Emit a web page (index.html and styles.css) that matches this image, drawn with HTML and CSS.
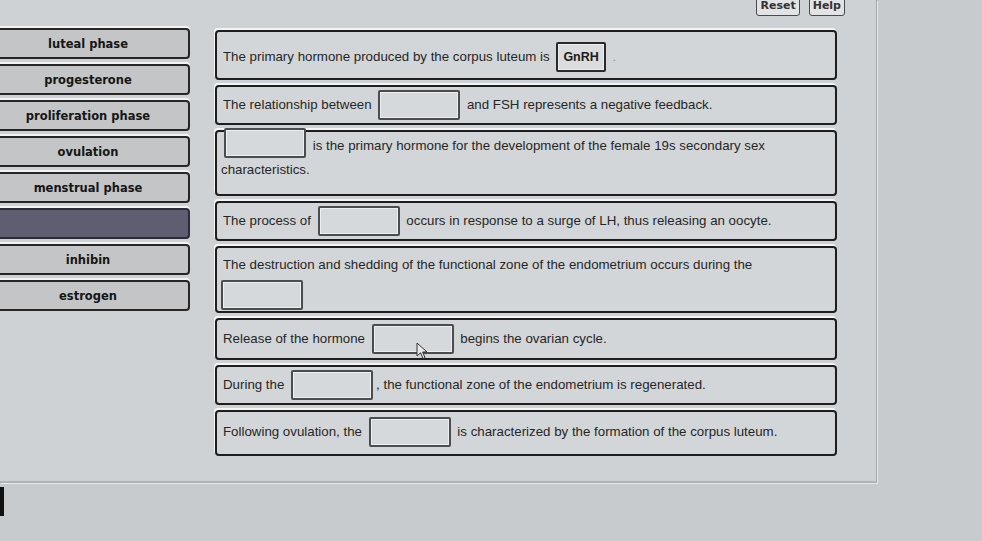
FILE: index.html
```html
<!DOCTYPE html>
<html>
<head>
<meta charset="utf-8">
<link rel="stylesheet" href="styles.css">
</head>
<body>
<div class="panel">
  <div class="toolbar">
    <span class="btn">Reset</span>
    <span class="btn">Help</span>
  </div>
  <div class="content">
    <div class="bank">
      <div class="chip">luteal phase</div>
      <div class="chip">progesterone</div>
      <div class="chip">proliferation phase</div>
      <div class="chip">ovulation</div>
      <div class="chip">menstrual phase</div>
      <div class="chip chip-empty"></div>
      <div class="chip">inhibin</div>
      <div class="chip">estrogen</div>
    </div>
    <div class="statements">
      <div class="stmt s1">The primary hormone produced by the corpus luteum is <span class="blank filled">GnRH</span> <span class="dot">.</span></div>
      <div class="stmt s2">The relationship between <span class="blank"></span> and FSH represents a negative feedback.</div>
      <div class="stmt s3"><span class="blank"></span> is the primary hormone for the development of the female 19s secondary sex characteristics.</div>
      <div class="stmt s2">The process of <span class="blank"></span> occurs in response to a surge of LH, thus releasing an oocyte.</div>
      <div class="stmt s5">The destruction and shedding of the functional zone of the endometrium occurs during the <span class="blank"></span> <span class="dot">.</span></div>
      <div class="stmt s6">Release of the hormone <span class="blank cursor-host"><svg class="cursor" width="14" height="18" viewBox="0 0 14 18"><path d="M1 1 L1 14 L4.5 10.8 L7 16.5 L9 15.6 L6.6 10 L11 10 Z" fill="#e8e8e8" stroke="#333" stroke-width="1"/></svg></span> begins the ovarian cycle.</div>
      <div class="stmt s2">During the <span class="blank"></span>, the functional zone of the endometrium is regenerated.</div>
      <div class="stmt s8">Following ovulation, the <span class="blank"></span> is characterized by the formation of the corpus luteum.</div>
    </div>
  </div>
</div>
<div class="marker"></div>
</body>
</html>
```

FILE: styles.css
```css
html, body {
  margin: 0;
  padding: 0;
}
body {
  background: #c8cbce;
  font-family: "Liberation Sans", Arial, sans-serif;
  color: #222;
  overflow: hidden;
  width: 982px;
  height: 541px;
}
.panel {
  width: 877px;
  height: 483px;
  box-sizing: border-box;
  background: #cfd2d5;
  border-right: 1px solid #a4a7aa;
  border-bottom: 2px solid #b0b3b6;
  box-shadow: 1px 1px 0 #e6e8ea;
  display: flex;
  flex-direction: column;
}
.toolbar {
  height: 28px;
  display: flex;
  justify-content: flex-end;
  align-items: flex-start;
  gap: 9px;
  padding-right: 31px;
}
.btn {
  margin-top: -5px;
  height: 19px;
  line-height: 19px;
  padding: 0 3px;
  border: 1px solid #4a4a4a;
  border-radius: 3px;
  background: #e2e3e4;
  font-family: "DejaVu Sans", Verdana, sans-serif;
  font-weight: bold;
  font-size: 11px;
  color: #333;
}
.content {
  display: flex;
  align-items: flex-start;
}
.bank {
  width: 190px;
  display: flex;
  flex-direction: column;
  gap: 5px;
}
.chip {
  margin-left: -14px;
  width: 204px;
  height: 31px;
  box-sizing: border-box;
  border: 2px solid #262626;
  border-radius: 4px;
  background: #c3c5c7;
  box-shadow: 0 -2px 0 #f2f3f4;
  display: flex;
  align-items: center;
  justify-content: center;
  font-family: "DejaVu Sans", Verdana, sans-serif;
  font-weight: bold;
  font-size: 11.5px;
  color: #151515;
}
.chip-empty {
  background: #5e5d71;
  border-color: #2c2b36;
}
.statements {
  margin-left: 25px;
  margin-top: 2px;
  width: 622px;
  display: flex;
  flex-direction: column;
  gap: 5px;
}
.stmt {
  box-sizing: border-box;
  border: 2px solid #1e1e1e;
  border-radius: 4px;
  background: #d3d6d8;
  box-shadow: -1px -2px 0 #f4f5f6;
  font-size: 13.3px;
  line-height: 18px;
  padding: 3px 6px;
  color: #262626;
}
.s1 { height: 50px; padding-top: 10px; }
.s2 { height: 40px; }
.s3 { height: 66px; padding: 0 4px; line-height: 20px; }
.s3 .blank { margin-top: -4px; margin-bottom: 2px; }
.s5 { height: 67px; padding-top: 8px; line-height: 18px; }
.s5 .blank { display: block; margin-top: 6px; margin-left: -2px; }
.s5 .dot { display: none; }
.s6 { height: 42px; padding-top: 4px; }
.s8 { height: 46px; padding-top: 5px; }
.blank {
  display: inline-block;
  vertical-align: middle;
  width: 78px;
  height: 26px;
  border: 2px solid #4a4c4e;
  border-radius: 2px;
  background: #d6d9db;
  box-shadow: inset 0 0 0 1px #eceeef;
  margin: 0 3px;
  position: relative;
}
.filled {
  width: auto;
  height: 26px;
  line-height: 26px;
  padding: 0 5px;
  font-weight: bold;
  font-size: 12.5px;
  color: #1a1a1a;
  background: #dadcde;
  border-color: #2a2a2a;
}
.dot {
  color: #9a9a9a;
}
.cursor {
  position: absolute;
  left: 42px;
  top: 16px;
}
.marker {
  width: 4px;
  height: 29px;
  background: #111;
  margin-top: 4px;
}
```
